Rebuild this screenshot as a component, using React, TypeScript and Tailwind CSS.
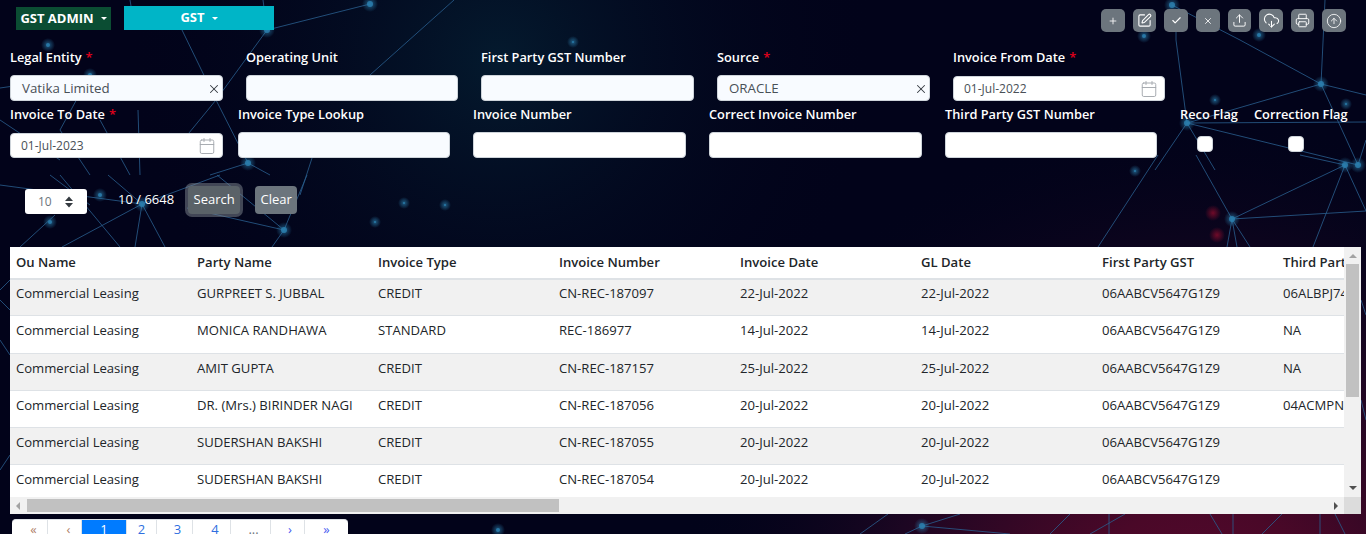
import { Calendar, Check, CircleArrowUp, CloudDownload, Plus, Printer, SquarePen, Upload, X } from "lucide-react";
import type { ReactNode } from "react";

const lines: number[][] = [
  [267, 30, 370, 4], [263, 0, 267, 30], [267, 30, 216, 100], [182, 30, 216, 100], [216, 100, 248, 163], [130, 0, 135, 30],
  [454, 0, 370, 75], [370, 75, 340, 100], [216, 100, 175, 150], [90, 75, 0, 88], [90, 75, 110, 100], [90, 75, 60, 130],
  [0, 120, 60, 160], [138, 110, 140, 175], [100, 120, 130, 175], [248, 163, 210, 175], [248, 163, 270, 175], [60, 130, 90, 175],
  [0, 185, 142, 204], [142, 204, 220, 175], [142, 204, 108, 175], [142, 204, 135, 247], [142, 204, 62, 247], [142, 204, 165, 247],
  [187, 208, 284, 230], [284, 230, 217, 175], [284, 230, 307, 175], [284, 230, 272, 247], [50, 175, 90, 205], [20, 247, 55, 215],
  [60, 175, 120, 247], [313, 155, 300, 195], [1172, 5, 1240, 40], [1176, 30, 1176, 40], [1325, 0, 1321, 84], [1240, 40, 1321, 84],
  [1187, 123, 1321, 84], [1187, 123, 1366, 122], [1187, 123, 1358, 165], [1176, 40, 1187, 123], [1321, 84, 1358, 165], [1321, 84, 1366, 95],
  [1187, 123, 1155, 170], [1187, 123, 1215, 170], [1232, 219, 1196, 155], [1098, 247, 1158, 155], [1232, 219, 1345, 165], [1232, 219, 1366, 211],
  [1345, 165, 1313, 247], [1345, 165, 1300, 155], [1345, 165, 1366, 211], [1232, 219, 1227, 247], [1232, 219, 1237, 247], [1232, 219, 1250, 247],
  [1366, 140, 1358, 165], [0, 290, 10, 280], [0, 300, 10, 310], [0, 340, 10, 355], [0, 470, 10, 455],
  [922, 526, 1010, 534], [922, 526, 960, 514], [922, 526, 905, 534], [860, 534, 888, 514], [1070, 514, 1050, 534], [1125, 514, 1090, 534],
  [1109, 514, 1109, 534], [1210, 514, 1222, 534], [1233, 514, 1233, 534], [1282, 514, 1262, 534], [1320, 514, 1320, 534], [1335, 514, 1345, 534],
  [1361, 400, 1366, 420], [1361, 300, 1366, 315],
];

const nodes: number[][] = [
  [370, 4, 3], [267, 30, 3], [48, 45, 2], [90, 75, 2], [248, 163, 3], [142, 204, 3], [284, 230, 3], [100, 195, 2], [50, 222, 2],
  [1172, 5, 3], [1144, 36, 2], [1259, 35, 2], [1321, 84, 3], [1187, 123, 3], [1358, 165, 3], [1345, 165, 3], [1232, 219, 3],
  [922, 526, 3], [498, 530, 2], [573, 42, 1], [404, 203, 1], [445, 205, 1], [375, 222, 1], [1135, 171, 1], [1215, 100, 1], [1346, 104, 1],
];

const columns = ["Ou Name", "Party Name", "Invoice Type", "Invoice Number", "Invoice Date", "GL Date", "First Party GST", "Third Party GST"];

const rowHeights = ["h-[36px]", "h-[38px]", "h-[37px]", "h-[37px]", "h-[37px]", "h-[33px]"];
const rowPad = ["pt-[3px]", "pt-[4px]", "pt-[4px]", "pt-[4px]", "pt-[4px]", "pt-[4px]"];

const rows: string[][] = [
  ["GURPREET S. JUBBAL", "CREDIT", "CN-REC-187097", "22-Jul-2022", "22-Jul-2022", "06ALBPJ7412K1Z5"],
  ["MONICA RANDHAWA", "STANDARD", "REC-186977", "14-Jul-2022", "14-Jul-2022", "NA"],
  ["AMIT GUPTA", "CREDIT", "CN-REC-187157", "25-Jul-2022", "25-Jul-2022", "NA"],
  ["DR. (Mrs.) BIRINDER NAGI", "CREDIT", "CN-REC-187056", "20-Jul-2022", "20-Jul-2022", "04ACMPN5521L1Z3"],
  ["SUDERSHAN BAKSHI", "CREDIT", "CN-REC-187055", "20-Jul-2022", "20-Jul-2022", ""],
  ["SUDERSHAN BAKSHI", "CREDIT", "CN-REC-187054", "20-Jul-2022", "20-Jul-2022", ""],
];

const pages = [
  { label: "«", width: "w-[36px] pl-[8px]", color: "text-[#b07f68]" },
  { label: "‹", width: "w-[34px] pl-[8px]", color: "text-[#b07f68]" },
  { label: "1", width: "w-[45px]", color: "bg-[#007bff] text-white" },
  { label: "2", width: "w-[30px]", color: "text-[#2f6fe0]" },
  { label: "3", width: "w-[36px] pl-[6px]", color: "text-[#2f6fe0]" },
  { label: "4", width: "w-[38px] pl-[7px]", color: "text-[#2f6fe0]" },
  { label: "...", width: "w-[40px] pl-[6px]", color: "text-[#6c757d]" },
  { label: "›", width: "w-[34px] pl-[5px]", color: "text-[#4a5cf0]" },
  { label: "»", width: "w-[43px]", color: "text-[#4a5cf0]" },
];

function Background() {
  return (
    <svg className="absolute inset-0" width="1366" height="534" viewBox="0 0 1366 534">
      <defs>
        <radialGradient id="redGlow" gradientUnits="userSpaceOnUse" cx="1200" cy="640" r="530">
          <stop offset="0" stopColor="#5a0a30" />
          <stop offset="0.25" stopColor="#4a0828" />
          <stop offset="0.6" stopColor="#1c0622" />
          <stop offset="1" stopColor="#02031a" stopOpacity="0" />
        </radialGradient>
        <radialGradient id="blueGlow" gradientUnits="userSpaceOnUse" cx="500" cy="60" r="380">
          <stop offset="0" stopColor="#041a2e" />
          <stop offset="1" stopColor="#02031a" stopOpacity="0" />
        </radialGradient>
        <radialGradient id="redSpot">
          <stop offset="0" stopColor="#8a0c2c" stopOpacity="0.8" />
          <stop offset="1" stopColor="#8a0c2c" stopOpacity="0" />
        </radialGradient>
        <radialGradient id="nodeHalo">
          <stop offset="0" stopColor="#2b7fae" stopOpacity="0.7" />
          <stop offset="1" stopColor="#2b7fae" stopOpacity="0" />
        </radialGradient>
      </defs>
      <rect width="1366" height="534" fill="#02031a" />
      <rect width="1366" height="534" fill="url(#blueGlow)" />
      <rect width="1366" height="534" fill="url(#redGlow)" />
      <circle cx="1213" cy="213" r="8" fill="url(#redSpot)" />
      <circle cx="1217" cy="235" r="8" fill="url(#redSpot)" />
      {lines.map(([x1, y1, x2, y2], i) => (
        <line key={i} x1={x1} y1={y1} x2={x2} y2={y2} stroke="#2a5f8f" strokeWidth="1" opacity="0.8" />
      ))}
      {nodes.map(([cx, cy, r], i) => (
        <g key={i}>
          <circle cx={cx} cy={cy} r={r + 5} fill="url(#nodeHalo)" />
          <circle cx={cx} cy={cy} r={r} fill="#2b7fae" opacity="0.85" />
        </g>
      ))}
    </svg>
  );
}

function Caret() {
  return <span className="ml-[7px] inline-block h-0 w-0 border-x-[3px] border-t-[3px] border-x-transparent border-t-white" />;
}

function ToolButton({ children, className = "w-[24px]" }: { children: ReactNode; className?: string }) {
  return <button className={`flex h-[23px] items-center justify-center rounded-[5px] bg-[#6c757d] text-white ${className}`}>{children}</button>;
}

function Field({
  label,
  required,
  value,
  tint,
  clear,
  date,
  className = "w-[213px]",
}: {
  label: string;
  required?: boolean;
  value?: string;
  tint?: boolean;
  clear?: boolean;
  date?: boolean;
  className?: string;
}) {
  return (
    <div className={`shrink-0 ${className}`}>
      <div className="h-[18px] text-[12.8px] leading-[16px] font-semibold whitespace-nowrap text-white">
        {label}
        {required && <span className="ml-[4px] text-[#e3001b]">*</span>}
      </div>
      <div
        className={`relative flex items-center rounded-[4px] border border-[#ced4da] text-[#495057] ${
          tint ? "bg-[#f8fbff]" : "bg-white"
        } ${date ? "mt-[9px] h-[25px] pl-[10px] text-[12px] text-[#6c757d]" : "mt-[8px] h-[26px] pt-[1px] pl-[11px] text-[13.3px]"}`}
      >
        {value}
        {clear && <X className="absolute right-[1px] text-[#343a40]" size={14} strokeWidth={1.75} />}
        {date && <Calendar className="absolute right-[6px] text-[#a3a8ad]" size={18} strokeWidth={1.25} />}
      </div>
    </div>
  );
}

function Flag({ label, className, boxClass }: { label: string; className: string; boxClass: string }) {
  return (
    <div className={`shrink-0 ${className}`}>
      <div className="h-[18px] text-[12.8px] leading-[16px] font-semibold whitespace-nowrap text-white">{label}</div>
      <div className={`mt-[12px] h-[16px] w-[16px] rounded-[4px] border border-[#ced4da] bg-white ${boxClass}`} />
    </div>
  );
}

export default function App() {
  return (
    <div className="relative h-[534px] w-[1366px] overflow-hidden font-['Open_Sans',sans-serif]">
      <Background />
      <div className="relative">
        <div className="flex h-[32px] items-start pt-[6px]">
          <button className="mt-[1px] ml-[16px] flex h-[23px] w-[95px] items-center justify-center bg-[#0b4d33] text-[13px] font-bold whitespace-nowrap text-white">
            GST ADMIN
            <Caret />
          </button>
          <button className="ml-[13px] flex h-[24px] w-[150px] items-center justify-center bg-[#00b5c7] text-[13px] font-bold text-white">
            GST
            <Caret />
          </button>
          <div className="mt-[3px] ml-auto flex gap-[8px] pr-[20px]">
            <ToolButton><Plus size={10} strokeWidth={2} /></ToolButton>
            <ToolButton className="w-[23px]"><SquarePen size={15} strokeWidth={1.75} /></ToolButton>
            <ToolButton><Check size={11} strokeWidth={2.5} /></ToolButton>
            <ToolButton><X size={10} strokeWidth={2} /></ToolButton>
            <ToolButton className="w-[23px]"><Upload size={15} strokeWidth={1.5} /></ToolButton>
            <ToolButton><CloudDownload size={17} strokeWidth={1.5} /></ToolButton>
            <ToolButton className="w-[23px]"><Printer size={15} strokeWidth={1.5} /></ToolButton>
            <ToolButton><CircleArrowUp size={16} strokeWidth={1.25} /></ToolButton>
          </div>
        </div>

        <div className="mt-[17px] flex gap-[23px] pl-[10px]">
          <Field label="Legal Entity" required value="Vatika Limited" tint clear />
          <Field label="Operating Unit" tint className="w-[212px]" />
          <Field label="First Party GST Number" tint />
          <Field label="Source" required value="ORACLE" tint clear />
          <Field label="Invoice From Date" required value="01-Jul-2022" date className="w-[212px]" />
        </div>

        <div className="mt-[5px] flex gap-[23px] pl-[10px]">
          <Field label="Invoice To Date" required value="01-Jul-2023" date className="mr-[-8px] w-[213px]" />
          <Field label="Invoice Type Lookup" tint className="w-[212px]" />
          <Field label="Invoice Number" />
          <Field label="Correct Invoice Number" />
          <Field label="Third Party GST Number" className="w-[212px]" />
          <Flag label="Reco Flag" className="w-[59px]" boxClass="ml-[17px]" />
          <Flag label="Correction Flag" className="ml-[-8px] w-[94px]" boxClass="ml-[34px]" />
        </div>

        <div className="mt-[28px] flex h-[28px] items-center pl-[25px]">
          <div className="flex h-[25px] w-[62px] items-center justify-between self-end rounded-[3px] bg-white pr-[13px] pl-[13px] text-[12px] text-[#6c757d]">
            10
            <svg width="10" height="12" viewBox="0 0 10 12" fill="#343a40">
              <path d="M5 0.5 9 5H1zM1 7h8l-4 4.5z" />
            </svg>
          </div>
          <span className="ml-[31px] text-[13px] text-white">10 / 6648</span>
          <button className="ml-[14px] h-[28px] w-[52px] rounded-[4px] bg-[#5a6268] text-[13px] text-white shadow-[0_0_0_3px_rgba(130,138,145,0.5)]">
            Search
          </button>
          <button className="ml-[15px] h-[28px] w-[42px] rounded-[4px] bg-[#6c757d] text-[13px] text-white">Clear</button>
        </div>

        <div className="mt-[33px] ml-[10px] w-[1351px] bg-white">
          <div className="flex h-[250px]">
            <div className="w-[1334px] overflow-hidden">
              <table className="w-[1448px] table-fixed border-collapse text-[13.1px] leading-[20px] text-[#212529]">
                <thead>
                  <tr className="h-[32px] border-b-2 border-[#dee2e6]">
                    {columns.map((c) => (
                      <th key={c} className="w-[181px] px-[6px] pb-[2px] text-left font-semibold whitespace-nowrap">{c}</th>
                    ))}
                  </tr>
                </thead>
                <tbody>
                  {rows.map((r, i) => (
                    <tr key={i} className={`border-b border-[#dee2e6] last:border-b-0 ${rowHeights[i]} ${i % 2 === 0 ? "bg-[#f1f1f1]" : "bg-white"}`}>
                      <td className={`overflow-hidden px-[6px] align-top whitespace-nowrap ${rowPad[i]}`}>Commercial Leasing</td>
                      {r.slice(0, 5).map((cell, j) => (
                        <td key={j} className={`overflow-hidden px-[6px] align-top whitespace-nowrap ${rowPad[i]}`}>{cell}</td>
                      ))}
                      <td className={`overflow-hidden px-[6px] align-top whitespace-nowrap ${rowPad[i]}`}>06AABCV5647G1Z9</td>
                      <td className={`overflow-hidden px-[6px] align-top whitespace-nowrap ${rowPad[i]}`}>{r[5]}</td>
                    </tr>
                  ))}
                </tbody>
              </table>
            </div>
            <div className="flex w-[17px] flex-col items-center bg-[#f1f1f1]">
              <div className="mt-[7px] h-0 w-0 border-x-[4px] border-b-[4px] border-x-transparent border-b-[#a3a3a3]" />
              <div className="mt-[6px] h-[133px] w-[13px] bg-[#c1c1c1]" />
              <div className="mt-auto mb-[7px] h-0 w-0 border-x-[4px] border-t-[4px] border-x-transparent border-t-[#505050]" />
            </div>
          </div>
          <div className="flex h-[17px] items-center bg-[#f1f1f1]">
            <div className="ml-[6px] h-0 w-0 border-y-[4px] border-r-[4px] border-y-transparent border-r-[#a3a3a3]" />
            <div className="ml-[7px] h-[13px] w-[532px] bg-[#c1c1c1]" />
            <div className="mr-[6px] ml-auto h-0 w-0 border-y-[4px] border-l-[4px] border-y-transparent border-l-[#505050]" />
            <div className="h-[17px] w-[17px] bg-[#dcdcdc]" />
          </div>
        </div>

        <div className="mt-[5px] ml-[12px] flex h-[30px] w-[336px] overflow-hidden rounded-t-[4px] border-t border-[#dee2e6] bg-white text-[13px]">
          {pages.map((p) => (
            <div key={p.label} className={`flex shrink-0 items-start justify-center border-r border-[#dee2e6] last:border-r-0 ${p.width} ${p.color}`}>
              {p.label}
            </div>
          ))}
        </div>
      </div>
    </div>
  );
}
